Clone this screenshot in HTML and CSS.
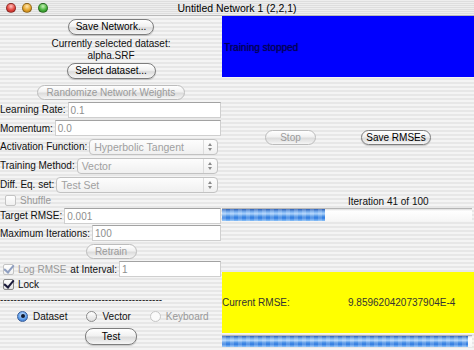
FILE: index.html
```html
<!DOCTYPE html>
<html lang="en">
<head>
  <meta charset="UTF-8" />
  <title>Untitled Network 1 (2,2,1)</title>
  <link rel="stylesheet" href="styles.css">
</head>
<body>
  <div class="titlebar">
    <div class="lights">
      <span class="light red"></span>
      <span class="light amber"></span>
      <span class="light green"></span>
    </div>
    <div class="title">Untitled Network 1 (2,2,1)</div>
    <div></div>
  </div>

  <div class="content">
    <div class="left">
      <div class="btn-row first"><button class="btn w-save">Save Network...</button></div>
      <div class="dataset-info">
        <div>Currently selected dataset:</div>
        <div>alpha.SRF</div>
      </div>
      <div class="btn-row select"><button class="btn w-select">Select dataset...</button></div>
      <div class="btn-row randomize"><button class="btn disabled w-random">Randomize Network Weights</button></div>

      <div class="row h19">
        <span class="label">Learning Rate:</span>
        <span class="field">0.1</span>
      </div>
      <div class="row h18">
        <span class="label">Momentum:</span>
        <span class="field">0.0</span>
      </div>
      <div class="row h19">
        <span class="label">Activation Function:</span>
        <span class="popup"><span class="popup-text">Hyperbolic Tangent</span><span class="arrows"></span></span>
      </div>
      <div class="row h19">
        <span class="label">Training Method:</span>
        <span class="popup"><span class="popup-text">Vector</span><span class="arrows"></span></span>
      </div>
      <div class="row h19">
        <span class="label">Diff. Eq. set:</span>
        <span class="popup"><span class="popup-text">Test Set</span><span class="arrows"></span></span>
      </div>
      <div class="row h13 check-row shuffle">
        <span class="check disabled"></span>
        <span class="muted">Shuffle</span>
      </div>
      <div class="row h17">
        <span class="label">Target RMSE:</span>
        <span class="field">0.001</span>
      </div>
      <div class="row h18">
        <span class="label">Maximum Iterations:</span>
        <span class="field">100</span>
      </div>
      <div class="btn-row retrain"><button class="btn disabled w-retrain">Retrain</button></div>
      <div class="row h18 check-row">
        <span class="check checked disabled"></span>
        <span class="muted">Log RMSE</span>
        <span class="label gap">at Interval:</span>
        <span class="field">1</span>
      </div>
      <div class="row h13 check-row">
        <span class="check checked"></span>
        <span class="label">Lock</span>
      </div>
      <div class="dashes">------------------------------------------------</div>
      <div class="radios">
        <span class="radio-item"><span class="radio on"></span>Dataset</span>
        <span class="radio-item"><span class="radio"></span>Vector</span>
        <span class="radio-item muted"><span class="radio disabled"></span>Keyboard</span>
      </div>
      <div class="btn-row test"><button class="btn w-test">Test</button></div>
    </div>

    <div class="right">
      <div class="status-panel">Training stopped</div>
      <div class="right-buttons">
        <button class="btn disabled w-stop">Stop</button>
        <button class="btn w-rmse">Save RMSEs</button>
      </div>
      <div class="iteration">Iteration 41 of 100</div>
      <div class="progress"><div class="progress-fill" style="width: 41%"></div></div>
      <div class="rmse-panel">
        <span class="rmse-label">Current RMSE:</span>
        <span>9.859620420737904E-4</span>
      </div>
      <div class="progress second"><div class="progress-fill" style="width: 98.4%"></div></div>
    </div>
  </div>
</body>
</html>
```

FILE: styles.css
```css
body {
  margin: 0;
  width: 474px;
  height: 350px;
  overflow: hidden;
  font-family: "Liberation Sans", Arial, sans-serif;
  font-size: 10px;
  color: #111;
  background: repeating-linear-gradient(#f4f4f4 0 2px, #e7e7e7 2px 4px);
}

.titlebar {
  height: 16px;
  display: grid;
  grid-template-columns: 1fr auto 1fr;
  align-items: center;
  background: repeating-linear-gradient(#eeeeee 0 1px, #dedede 1px 2px);
  border-bottom: 1px solid #b8b8b8;
  box-sizing: border-box;
}
.lights {
  display: flex;
  gap: 6px;
  padding-left: 6px;
}
.light {
  width: 10px;
  height: 10px;
  border-radius: 50%;
  box-sizing: border-box;
  border: 1px solid rgba(0, 0, 0, 0.35);
}
.light.red { background: radial-gradient(circle at 50% 30%, #ffc2bd 0, #e2463f 55%, #a8231d 100%); }
.light.amber { background: radial-gradient(circle at 50% 30%, #ffe7b0 0, #e5a52c 55%, #a86d0c 100%); }
.light.green { background: radial-gradient(circle at 50% 30%, #c8f2b8 0, #48b23c 55%, #21741a 100%); }
.title {
  font-size: 10.5px;
  color: #000;
}

.content {
  display: grid;
  grid-template-columns: 222px 252px;
}

/* left column */
.left {
  display: flex;
  flex-direction: column;
}

.btn {
  font-family: inherit;
  font-size: 10px;
  color: #000;
  height: 16px;
  padding: 0;
  border: 1px solid #7d7d7d;
  border-radius: 8px;
  background: linear-gradient(#ffffff 0, #f1f1f1 45%, #dcdcdc 55%, #f5f5f5 100%);
  box-shadow: 0 1px 1px rgba(0, 0, 0, 0.18);
  line-height: 14px;
}
.btn.disabled {
  color: #9b9b9b;
  border-color: #bcbcbc;
  box-shadow: none;
}

.btn-row {
  display: flex;
  justify-content: center;
}
.btn-row.first { padding-top: 3px; }
.btn-row.select { padding-top: 1px; }
.btn-row.randomize { padding-top: 6px; height: 21px; box-sizing: border-box; }
.btn-row.retrain { height: 18px; padding-top: 2px; box-sizing: border-box; }
.btn-row.test { padding-top: 3px; }

.w-save { width: 86px; }
.w-select { width: 89px; }
.w-random { width: 148px; height: 15px; line-height: 13px; }
.w-retrain { width: 51px; height: 15px; line-height: 13px; }
.w-test { width: 52px; height: 17px; line-height: 15px; }
.w-stop { width: 51px; height: 15px; line-height: 13px; }
.w-rmse { width: 70px; height: 15px; line-height: 13px; }

.dataset-info {
  padding-top: 3px;
  height: 27px;
  box-sizing: border-box;
  text-align: center;
  line-height: 12px;
}

.row {
  display: flex;
  align-items: center;
  white-space: nowrap;
}
.h13 { height: 13px; }
.h17 { height: 17px; }
.h18 { height: 18px; }
.h19 { height: 19px; }

.label {
  color: #111;
  margin-right: 2px;
}
.label.gap { margin-left: 4px; }
.muted { color: #999; }

.field {
  flex: 1;
  height: 16px;
  line-height: 16px;
  box-sizing: border-box;
  margin-right: 1px;
  padding-left: 2px;
  background: #fff;
  border: 1px solid #cfcfcf;
  border-top-color: #a2a2a2;
  color: #8e8e8e;
}

.popup {
  flex: 1;
  display: flex;
  height: 16px;
  margin-right: 4px;
  box-sizing: border-box;
  border: 1px solid #c2c2c2;
  border-radius: 4px;
  background: linear-gradient(#fdfdfd, #f0f0f0);
}
.popup-text {
  flex: 1;
  padding-left: 4px;
  line-height: 14px;
  color: #a0a0a0;
  font-size: 10.5px;
}
.arrows {
  width: 13px;
  border-left: 1px solid #dcdcdc;
  background:
    linear-gradient(to top right, transparent 50%, #9a9a9a 50%) no-repeat,
    linear-gradient(to top left, transparent 50%, #9a9a9a 50%) no-repeat;
  background-size: 0 0;
  position: relative;
}
.arrows::before,
.arrows::after {
  content: "";
  position: absolute;
  left: 4px;
  border-left: 2.5px solid transparent;
  border-right: 2.5px solid transparent;
}
.arrows::before {
  top: 3px;
  border-bottom: 3px solid #8a8a8a;
}
.arrows::after {
  bottom: 3px;
  border-top: 3px solid #8a8a8a;
}

.check-row { padding-left: 3px; }
.check-row.shuffle { padding-left: 5px; }
.check {
  width: 11px;
  height: 11px;
  box-sizing: border-box;
  border: 1px solid #8c8c8c;
  border-radius: 2px;
  background: linear-gradient(#ffffff, #e3e3e3);
  margin-right: 4px;
  position: relative;
  flex: none;
}
.check.disabled {
  border-color: #c4c4c4;
  background: linear-gradient(#ffffff, #f0f0f0);
}
.check.checked::after {
  content: "";
  position: absolute;
  left: 2px;
  top: -2px;
  width: 4px;
  height: 8px;
  border-right: 2px solid #1a1a3a;
  border-bottom: 2px solid #1a1a3a;
  transform: rotate(40deg);
}
.check.checked.disabled::after {
  border-color: #8e9ec0;
}

.dashes {
  height: 16px;
  line-height: 18px;
  overflow: hidden;
  white-space: nowrap;
  color: #222;
  letter-spacing: 0.05px;
}

.radios {
  display: flex;
  align-items: center;
  height: 18px;
  padding-left: 17px;
  gap: 19px;
}
.radio-item {
  display: flex;
  align-items: center;
  gap: 5px;
}
.radio {
  width: 11px;
  height: 11px;
  box-sizing: border-box;
  border-radius: 50%;
  border: 1px solid #8c8c8c;
  background: linear-gradient(#ffffff, #dedede);
  position: relative;
}
.radio.disabled { border-color: #c6c6c6; background: #fafafa; }
.radio.on {
  border-color: #3a5f9a;
  background: radial-gradient(circle at 50% 35%, #cfe6ff 0, #5a9ae8 60%, #2d63b8 100%);
}
.radio.on::after {
  content: "";
  position: absolute;
  left: 2.5px;
  top: 2.5px;
  width: 4px;
  height: 4px;
  border-radius: 50%;
  background: #101a30;
}

/* right column */
.right {
  display: flex;
  flex-direction: column;
}
.status-panel {
  height: 61px;
  background: #0000ff;
  display: flex;
  align-items: center;
  padding-left: 2px;
  padding-top: 1px;
  box-sizing: border-box;
  color: #000058;
  text-shadow: 0 0 1px #000060;
}
.right-buttons {
  display: flex;
  gap: 45px;
  padding-left: 43px;
  margin-top: 53px;
}
.iteration {
  margin-top: 51px;
  height: 12px;
  line-height: 12px;
  padding-left: 126px;
}
.progress {
  height: 13px;
  width: 250px;
  box-sizing: border-box;
  background: linear-gradient(#dcdcdc 0, #ffffff 2px, #f6f6f6 100%);
  border-top: 1px solid #b5b5b5;
}
.progress.second {
  margin-top: 2px;
  height: 12px;
}
.progress-fill {
  height: 100%;
  background:
    repeating-linear-gradient(90deg, rgba(255, 255, 255, 0.18) 0 4px, rgba(255, 255, 255, 0) 4px 8px),
    linear-gradient(#2c5fb4 0, #7fb4f2 25%, #a9d0fb 40%, #4d93e6 60%, #2f7ae0 75%, #8cc2f8 100%);
}
.rmse-panel {
  margin-top: 51px;
  height: 61px;
  background: #ffff00;
  display: flex;
  align-items: center;
  color: #333;
}
.rmse-label {
  width: 126px;
}
```
